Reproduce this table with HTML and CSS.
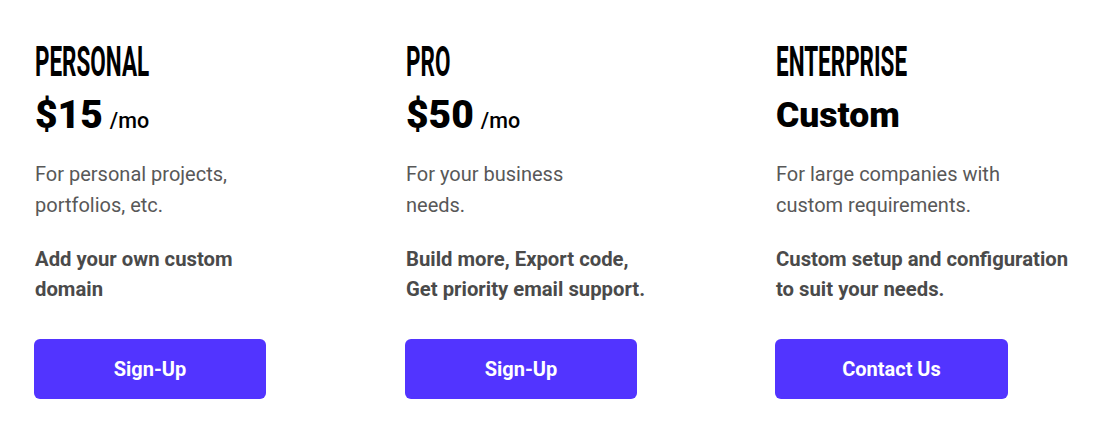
FILE: index.html
```html
<!DOCTYPE html>
<html>
<head>
<meta charset="utf-8">
<link rel="stylesheet" href="styles.css">
</head>
<body>
<main class="plans">
  <section class="plan">
    <h2 class="plan-name"><span>PERSONAL</span></h2>
    <div class="price"><span class="amount">$15</span><span class="period">/mo</span></div>
    <p class="desc">For personal projects,<br>portfolios, etc.</p>
    <p class="feature">Add your own custom<br>domain</p>
    <button class="cta">Sign-Up</button>
  </section>
  <section class="plan">
    <h2 class="plan-name"><span>PRO</span></h2>
    <div class="price"><span class="amount">$50</span><span class="period">/mo</span></div>
    <p class="desc">For your business<br>needs.</p>
    <p class="feature">Build more, Export code,<br>Get priority email support.</p>
    <button class="cta">Sign-Up</button>
  </section>
  <section class="plan">
    <h2 class="plan-name"><span>ENTERPRISE</span></h2>
    <div class="price"><span class="amount custom">Custom</span></div>
    <p class="desc">For large companies with<br>custom requirements.</p>
    <p class="feature">Custom setup and configuration<br>to suit your needs.</p>
    <button class="cta cta-wide">Contact Us</button>
  </section>
</main>
</body>
</html>
```
FILE: styles.css
```css
* { box-sizing: border-box; }
html, body { margin: 0; padding: 0; background: #fff; }
body { font-family: Roboto, "Liberation Sans", sans-serif; color: #000; }
.plans {
  display: grid;
  grid-template-columns: 371px 370px 1fr;
  padding: 40px 0 0 35px;
}
.plan { display: flex; flex-direction: column; align-items: flex-start; }
.plan-name {
  margin: 0;
  height: 44px;
  font-size: 42px;
  line-height: 44px;
  font-weight: 700;
  letter-spacing: 0;
}
.plan-name span {
  display: inline-block;
  transform: scaleX(0.535);
  transform-origin: left center;
}
.price {
  margin-top: 6px;
  display: flex;
  align-items: baseline;
  gap: 7px;
  height: 50px;
}
.amount { font-size: 39px; font-weight: 900; line-height: 50px; }
.amount.custom { font-size: 35.5px; }
.period { font-size: 21.5px; font-weight: 500; }
.desc {
  margin: 19px 0 0;
  font-size: 20px;
  line-height: 31px;
  color: #585858;
}
.feature {
  margin: 23px 0 0;
  font-size: 20.3px;
  line-height: 30px;
  font-weight: 700;
  color: #4a4a4a;
}
.cta {
  margin-top: 35px;
  width: 232px;
  height: 60px;
  border: 0;
  border-radius: 6px;
  background: #5234ff;
  color: #fff;
  font-family: Roboto, "Liberation Sans", sans-serif;
  font-size: 20px;
  font-weight: 700;
  margin-left: -1px;
}
.cta-wide { width: 233px; }
```
